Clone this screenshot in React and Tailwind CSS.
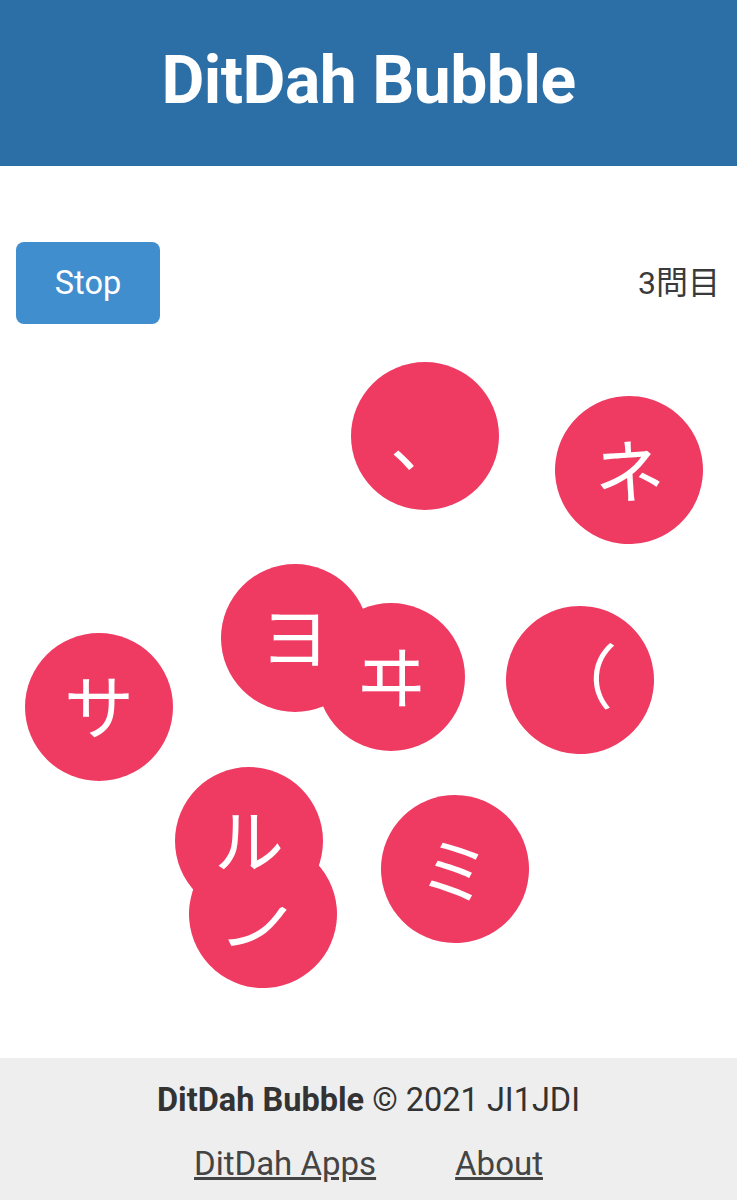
import React from "react";

const bubbles = [
  { ch: "、", x: 351, y: 38, r: 0, dy: 0 },
  { ch: "ネ", x: 555, y: 72, r: -4, dy: -2 },
  { ch: "ヨ", x: 221, y: 240, r: 0, dy: -4 },
  { ch: "ヰ", x: 317, y: 279, r: 0, dy: -3 },
  { ch: "サ", x: 25, y: 309, r: 0, dy: -3 },
  { ch: "（", x: 506, y: 282, r: 4, dy: -9 },
  { ch: "ノ", x: 189, y: 516, r: 18, dy: 9 },
  { ch: "ル", x: 175, y: 443, r: 0, dy: -3 },
  { ch: "ミ", x: 381, y: 471, r: 6, dy: -2 },
];

export default function App() {
  return (
    <div className="w-[737px] min-h-[1200px] flex flex-col bg-white" style={{ fontFamily: "Roboto, 'Noto Sans CJK JP', sans-serif" }}>
      <header className="h-[166px] bg-[#2c6fa7] flex items-center justify-center">
        <h1 className="text-white font-bold text-[66px] leading-none tracking-[-0.5px] pb-[4px]">DitDah Bubble</h1>
      </header>
      <main className="flex-1 px-[16px] pt-[76px] flex flex-col">
        <div className="flex items-center justify-between">
          <button className="w-[144px] h-[82px] rounded-[8px] bg-[#418ece] text-white text-[32.5px]">Stop</button>
          <span className="text-[32px] text-[#3a3a3a] mr-[1px]">3問目</span>
        </div>
        <div className="relative h-[734px] -mx-[16px]">
          {bubbles.map((b, i) => (
            <div
              key={i}
              className="absolute w-[148px] h-[148px] rounded-full bg-[#ef3a62] flex items-center justify-center text-white text-[70px] leading-none"
              style={{ left: b.x, top: b.y, transform: `rotate(${b.r}deg)`, fontFamily: "'Noto Sans CJK JP', sans-serif" }}
            >
              <span className="relative" style={{ top: b.dy }}>{b.ch}</span>
            </div>
          ))}
        </div>
      </main>
      <footer className="h-[142px] bg-[#eeeeee] flex flex-col items-center text-[#333]">
        <p className="mt-[22px] leading-[40px] text-[32.5px]">
          <span className="font-bold">DitDah Bubble</span> © 2021 JI1JDI
        </p>
        <div className="mt-[24px] flex gap-[79px] leading-[40px] text-[#444] text-[33px]">
          <a className="underline">DitDah Apps</a>
          <a className="underline">About</a>
        </div>
      </footer>
    </div>
  );
}
